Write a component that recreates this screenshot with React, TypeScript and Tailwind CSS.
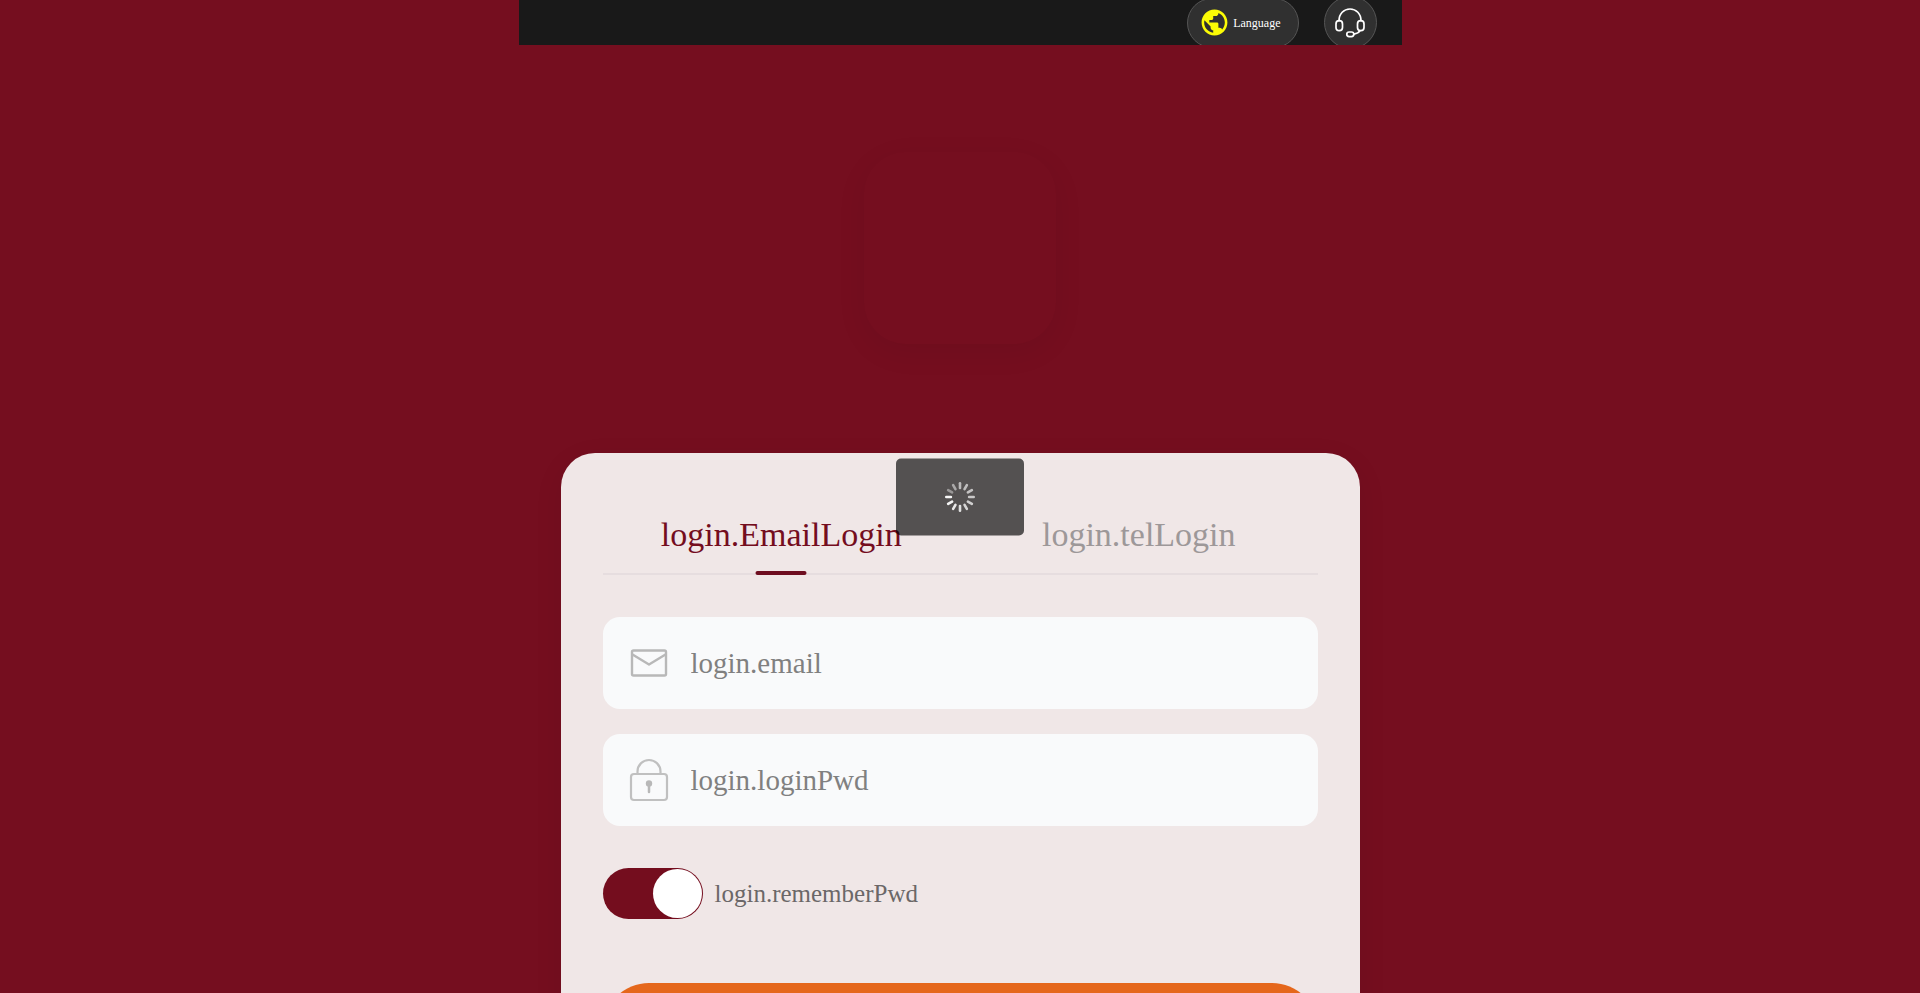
import { useState } from "react";

function GlobeIcon() {
  return (
    <svg viewBox="0 0 24 24" className="size-[31px] shrink-0" fill="#fbfb05" aria-hidden="true">
      <path d="M12 2C6.48 2 2 6.48 2 12s4.48 10 10 10 10-4.48 10-10S17.52 2 12 2zm-1 17.93c-3.95-.49-7-3.85-7-7.93 0-.62.08-1.21.21-1.79L9 15v1c0 1.1.9 2 2 2v1.93zm6.9-2.54c-.26-.81-1-1.39-1.9-1.39h-1v-3c0-.55-.45-1-1-1H8v-2h2c.55 0 1-.45 1-1V7h2c1.1 0 2-.9 2-2v-.41c2.93 1.19 5 4.06 5 7.41 0 2.08-.8 3.97-2.1 5.39z" />
    </svg>
  );
}

function HeadsetIcon() {
  return (
    <svg viewBox="0 0 30 30" className="size-[30px] shrink-0" fill="none" stroke="#fff" strokeWidth="1.7" strokeLinecap="round" aria-hidden="true">
      <path d="M4 12.700C4 5.800 8.800 1 15 1S26 5.800 26 12.700" />
      <rect x="1" y="12.700" width="6.500" height="10" rx="3.200" />
      <rect x="22.500" y="12.700" width="6.500" height="10" rx="3.200" />
      <path d="M25 22.700c-1 1.800-3 3-6 3.400" />
      <rect x="11.800" y="24" width="7" height="4.600" rx="2.300" />
    </svg>
  );
}

function MailIcon() {
  return (
    <svg viewBox="0 0 40 44" className="h-11 w-10 shrink-0" fill="none" stroke="#b8b8b8" strokeWidth="2.4" strokeLinejoin="round" aria-hidden="true">
      <rect x="3" y="9.500" width="34" height="25" rx="1.500" />
      <path d="M3.500 13.500 20 23.500l16.500-10" />
    </svg>
  );
}

function LockIcon() {
  return (
    <svg viewBox="0 0 40 44" className="h-11 w-10 shrink-0" fill="none" stroke="#c0c0c0" strokeWidth="2.2" aria-hidden="true">
      <path d="M8.500 16V13.500a11.500 11.500 0 0 1 23 0v2.500" />
      <rect x="2" y="16" width="36" height="26" rx="3" />
      <circle cx="20" cy="25.500" r="3.200" fill="#b8b8b8" stroke="none" />
      <path d="M20 26v8" strokeWidth="2.500" stroke="#b8b8b8" strokeLinecap="round" />
    </svg>
  );
}

const spokes = [0.6, 0.62, 0.65, 0.68, 0.72, 0.76, 0.82, 0.88, 0.93, 0.96, 0.4, 0.5];

function Spinner() {
  return (
    <svg viewBox="0 0 32 32" className="size-8" aria-hidden="true">
      {spokes.map((opacity, i) => (
        <rect key={i} x="14.7" y="1.5" width="2.6" height="7.2" rx="1.3" fill="#fff" opacity={opacity} transform={`rotate(${i * 30} 16 16.5)`} />
      ))}
    </svg>
  );
}

const tabs = ["login.EmailLogin", "login.telLogin"];

const fields = [
  { id: "email", type: "email", label: "login.email", Icon: MailIcon },
  { id: "password", type: "password", label: "login.loginPwd", Icon: LockIcon },
];

export default function App() {
  const [active, setActive] = useState(0);
  const [remember, setRemember] = useState(true);

  return (
    <div className="h-screen overflow-y-auto bg-[#750e1f] font-['Liberation_Serif',serif] [scrollbar-width:none]">
      <div className="mx-auto w-full max-w-[883px]">
        <header className="flex h-[45px] items-center justify-end gap-[25px] overflow-hidden bg-[#191919] pr-[25px]">
          <button type="button" className="flex h-[50px] shrink-0 items-center gap-[3px] rounded-full border border-[#555] bg-[#303030] pr-[17px] pl-[11px] text-xs text-white">
            <GlobeIcon />
            Language
          </button>
          <button type="button" aria-label="Customer service" className="flex size-[53px] shrink-0 items-center justify-center rounded-full border border-[#555] bg-[#303030]">
            <HeadsetIcon />
          </button>
        </header>

        <main className="px-[42px]">
          <div className="mx-auto mt-[107px] size-48 rounded-[42px] shadow-[0_8px_32px_rgba(0,0,0,0.06)]" />

          <form className="mt-[109px] rounded-[34px] bg-[#f0e7e7] px-[42px] pt-[50px] pb-16 shadow-[0_8px_32px_rgba(0,0,0,0.06)]" onSubmit={(e) => e.preventDefault()}>
            <div role="tablist" className="flex border-b-2 border-[#e6dddf]">
              {tabs.map((tab, i) => (
                <button
                  key={tab}
                  type="button"
                  role="tab"
                  aria-selected={active === i}
                  onClick={() => setActive(i)}
                  className={`relative h-[70px] flex-1 pb-1.5 text-[34px] leading-10 ${active === i ? "text-[#740d1e]" : "text-[#9d9899]"}`}
                >
                  {tab}
                  {active === i && <span className="absolute -bottom-0.5 left-1/2 h-1 w-[51px] -translate-x-1/2 rounded-sm bg-[#6e0e20]" />}
                </button>
              ))}
            </div>

            <div className="mt-[42px] flex flex-col gap-[25px]">
              {fields.map(({ id, type, label, Icon }) => (
                <label key={id} htmlFor={id} className="flex h-[92px] items-center gap-[22px] rounded-[17px] bg-[#f9fafb] px-[26px]">
                  <Icon />
                  <input id={id} type={type} placeholder={label} aria-label={label} className="min-w-0 flex-1 bg-transparent text-[29px] leading-9 text-[#333] outline-none placeholder:text-[#808080]" />
                </label>
              ))}
            </div>

            <label className="mt-[42px] flex items-center gap-3 text-[25px] leading-8 text-[#6b6768]">
              <input type="checkbox" role="switch" checked={remember} onChange={(e) => setRemember(e.target.checked)} className="peer sr-only" />
              <span className="flex h-[51px] w-[100px] rounded-full bg-[#c9c2c3] p-px peer-checked:justify-end peer-checked:bg-[#740d1e]">
                <span className="size-[49px] rounded-full bg-white" />
              </span>
              login.rememberPwd
            </label>

            <button type="submit" aria-label="Log in" className="mt-16 h-[92px] w-full rounded-full bg-[#e5671c]" />
          </form>
        </main>
      </div>

      <div role="status" aria-label="Loading" className="fixed top-1/2 left-1/2 flex h-[77px] w-32 -translate-1/2 items-center justify-center rounded-[5px] bg-black/65">
        <Spinner />
      </div>
    </div>
  );
}
